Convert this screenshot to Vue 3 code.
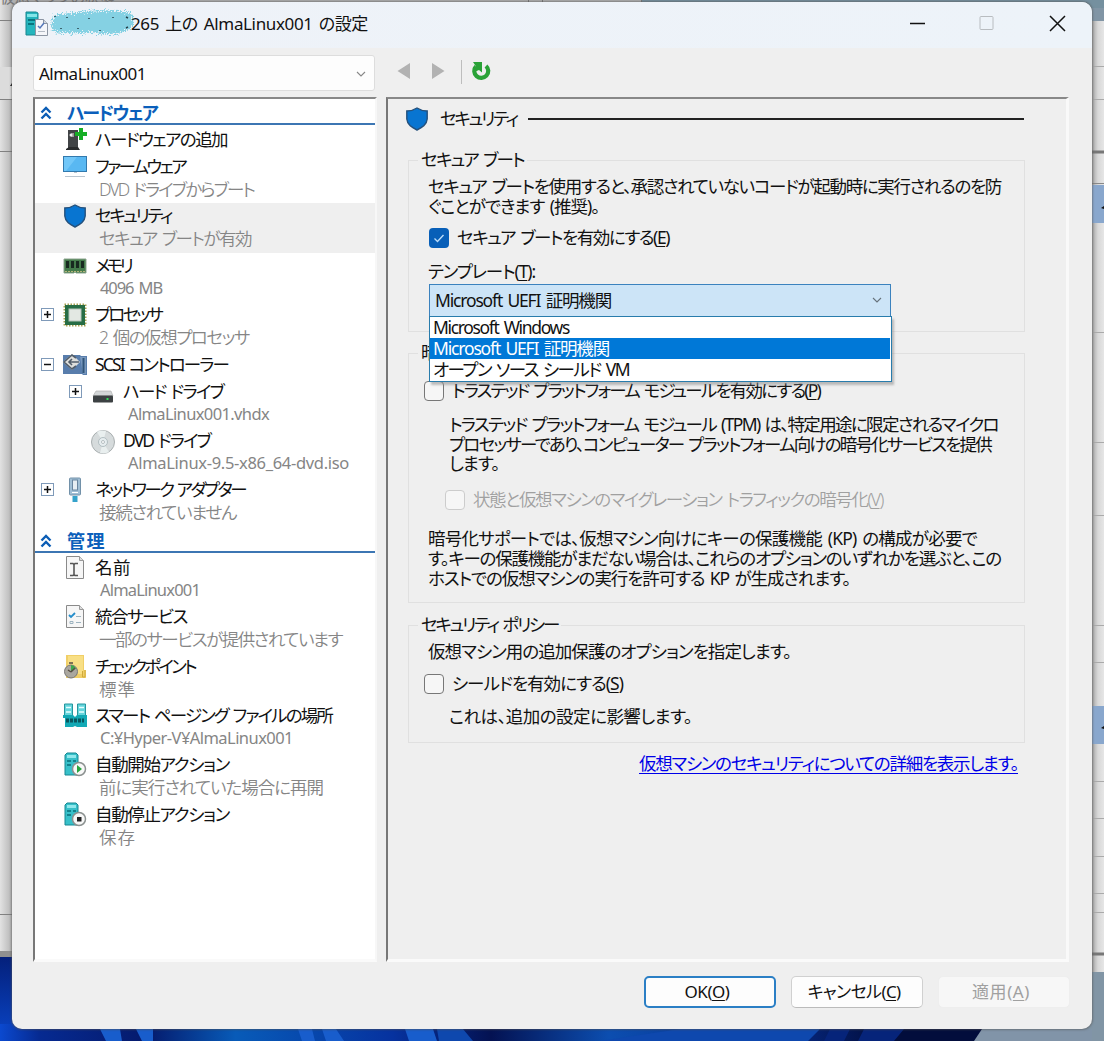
<script setup>
import { ref } from 'vue'

// Spreads the letters of a line so that it takes the given width.
const vFit = {
  mounted(el, { value }) {
    const natural = el.getBoundingClientRect().width
    const count = [...el.textContent].length
    el.style.letterSpacing = `${(value - natural) / count}px`
  },
}

const hardware = ref([
  { icon: 'add', name: 'ハードウェアの追加', w: 132 },
  { icon: 'firmware', name: 'ファームウェア', w: 90, sub: 'DVD ドライブからブート', sw: 155 },
  { icon: 'shield', name: 'セキュリティ', w: 76, sub: 'セキュア ブートが有効', sw: 152, selected: true },
  { icon: 'memory', name: 'メモリ', w: 35, sub: '4096 MB', sw: 62, latin: true },
  { icon: 'cpu', name: 'プロセッサ', w: 66, sub: '2 個の仮想プロセッサ', sw: 150, box: '+' },
  { icon: 'scsi', name: 'SCSI コントローラー', w: 133, box: '-' },
  { icon: 'disk', name: 'ハード ドライブ', w: 100, sub: 'AlmaLinux001.vhdx', sw: 141, latin: true, box: '+', child: true },
  { icon: 'dvd', name: 'DVD ドライブ', w: 87, sub: 'AlmaLinux-9.5-x86_64-dvd.iso', sw: 221, latin: true, child: true },
  { icon: 'network', name: 'ネットワーク アダプター', w: 150, sub: '接続されていません', sw: 137, box: '+' },
])
const management = ref([
  { icon: 'name', name: '名前', w: 36, sub: 'AlmaLinux001', sw: 100, latin: true },
  { icon: 'services', name: '統合サービス', w: 92, sub: '一部のサービスが提供されています', sw: 243 },
  { icon: 'checkpoint', name: 'チェックポイント', w: 100, sub: '標準', sw: 37 },
  { icon: 'paging', name: 'スマート ページング ファイルの場所', w: 237, sub: 'C:¥Hyper-V¥AlmaLinux001', sw: 193, latin: true },
  { icon: 'start', name: '自動開始アクション', w: 134, sub: '前に実行されていた場合に再開', sw: 224 },
  { icon: 'stop', name: '自動停止アクション', w: 134, sub: '保存', sw: 37 },
])
const groups = [
  { title: 'ハードウェア', w: 90, items: hardware.value },
  { title: '管理', w: 39, items: management.value },
]
</script>

<template>
  <div class="desktop">
    <svg class="backdrop" width="1104" height="1041" viewBox="0 0 1104 1041">
      <defs>
        <linearGradient id="wall" x1="0" x2="1">
          <stop offset="0" stop-color="#0b49cf" /><stop offset=".04" stop-color="#062a91" />
          <stop offset=".15" stop-color="#051a6c" /><stop offset=".24" stop-color="#085bb8" />
          <stop offset=".4" stop-color="#06329f" /><stop offset=".5" stop-color="#041252" />
          <stop offset=".62" stop-color="#0c4eb0" /><stop offset=".8" stop-color="#062a85" /><stop offset=".9" stop-color="#020d3c" />
        </linearGradient>
        <linearGradient id="side" x1="0" x2="1"><stop offset="0" stop-color="#a5a5a5" /><stop offset=".5" stop-color="#d8d8d8" /><stop offset="1" stop-color="#e6e6e6" /></linearGradient>
        <linearGradient id="lside" x1="0" x2="1"><stop offset="0" stop-color="#e2e2e2" /><stop offset="1" stop-color="#b5b5b5" /></linearGradient>
        <linearGradient id="leftblue" x1="0" y1="0" x2="0" y2="1"><stop offset="0" stop-color="#04207b" /><stop offset="1" stop-color="#0a46c8" /></linearGradient>
      </defs>
      <rect width="1104" height="1041" fill="#8195a5" />
      <rect width="564" height="8" fill="#b0b0b0" />
      <path d="M528.500 0v3M542.500 0v3M641.500 0v3" stroke="#777" />
      <rect x="564" width="77" height="8" fill="#b0b0b0" />
      <rect x="642" width="462" height="8" fill="#75909f" />
      <rect y="0" width="12" height="957" fill="url(#lside)" />
      <path d="M0 20.500h12M0 99.500h12M0 151.500h12M0 914.500h12" stroke="#808080" />
      <rect y="67" width="12" height="32" fill="#dcdcdc" />
      <rect y="951" width="12" height="6" fill="#909090" />
      <rect y="957" width="30" height="84" fill="url(#leftblue)" />
      <rect y="1024" width="982" height="17" fill="url(#wall)" />
      <path d="M100 1029h20l2 12h-16zM136 1029h17v12h-11zM298 1029h14l3 12h-13zM322 1029h14l8 12h-18zM405 1029h28l4 12h-28z" fill="#185dcc" />
      <path d="M437 1029h26l10 12h-34zM600 1041l80-12h140l-12 12z" fill="#0e48ae" />
      <path d="M830 1029h20l-6 12h-20zM864 1029h40l-10 12h-36z" fill="#06247a" />
      <path d="M982 1029h110v12H974z" fill="#8194a8" />
      <rect x="1092" y="21" width="12" height="951" fill="url(#side)" />
      <path d="M1092 66.500h12M1092 99.500h12M1092 332.500h12M1092 442.500h12M1092 515.500h12M1092 625.500h12M1092 662.500h12M1092 781.500h12M1092 818.500h12M1092 856.500h12M1092 893.500h12M1092 912.500h12" stroke="#aaa" />
      <path d="M1092 152h12M1092 954h12" stroke="#777" stroke-width="3" />
      <path d="M1092 183.500h12" stroke="#888" />
      <rect x="1092" y="185" width="12" height="38" fill="#89a7cd" />
      <rect x="1092" y="706" width="12" height="38" fill="#89a7cd" />
      <path d="M1101 208l3-2v3zM1101 728l3-2v3z" fill="#111" />
      <path d="M12 83l-2 3h2z" fill="#111" />
    </svg>
    <span class="behind">仮想マシンの状態</span>

    <div class="window">
      <header class="titlebar">
        <svg class="appicon" width="24" height="26" viewBox="0 0 24 26">
          <path d="M1 1h10l2 1v22H1z" fill="#25b5bd" stroke="#19868f" />
          <path d="M2 3h10v3H2z" fill="#83e6e8" /><path d="M3 9h8M3 13h6" stroke="#08757e" stroke-width="2" />
          <path d="M10.500 8.500h8l4 4v12h-12z" fill="#f5f6fa" stroke="#8c95a3" /><path d="M18.500 8.500v4h4" fill="#cfd6df" stroke="#8c95a3" />
          <path d="M13 15l2 2 4-5" fill="none" stroke="#5577b9" stroke-width="1.500" /><path d="M13 20.500h7" stroke="#b4bbc5" />
        </svg>
        <svg class="scribble" width="84" height="28" viewBox="0 0 84 28">
          <filter id="spray" x="-10%" y="-20%" width="120%" height="140%">
            <feTurbulence type="fractalNoise" baseFrequency=".8" numOctaves="2" seed="4" />
            <feDisplacementMap in="SourceGraphic" scale="11" xChannelSelector="R" yChannelSelector="G" />
          </filter>
          <path d="M3 12C1 5 13 6 24 5C45 1 70 2 80 5C87 12 85 19 77 22C66 28 50 26 42 24C28 25 12 27 4 23C0 18 1 15 3 12z" fill="#85d1e3" filter="url(#spray)" />
          <path d="M5 8v1M17 9v1M28 20v1M39 10v1M50 22v1M63 9v1M76 9l2 1M76 20l2-1M11 20v1" stroke="#24404a" stroke-width="1.500" />
        </svg>
        <h1 class="title"><span v-fit="237">265 上の AlmaLinux001 の設定</span></h1>
        <svg class="controls" width="160" height="20" viewBox="0 0 160 20">
          <path d="M0 10.500h15" stroke="#111" stroke-width="1.300" />
          <rect x="70" y="3.500" width="13" height="13" rx="1" fill="none" stroke="#b8bcc0" />
          <path d="M140 3l15 15M155 3l-15 15" stroke="#111" stroke-width="1.500" />
        </svg>
      </header>

      <div class="toolbar">
        <div class="vmselect"><span v-fit="107">AlmaLinux001</span>
          <svg width="10" height="8" viewBox="0 0 10 8"><path d="M1 2l4 4 4-4" fill="none" stroke="#888" stroke-width="1.100" /></svg>
        </div>
        <svg class="nav" width="100" height="28" viewBox="0 0 100 28">
          <path d="M15 6v16L2.500 14zM37 6v16l12.500-8z" fill="#b2b2b2" />
          <path d="M66.500 3v24" stroke="#bdbdbd" />
          <path d="M81 9.500A7 6.800 0 1 0 91 9" fill="none" stroke="#2aa237" stroke-width="4.200" />
          <path d="M78 5h9v10.500l-3-2.500-3.500 1.500L81 9.500z" fill="#2aa237" />
        </svg>
      </div>

      <main class="panes">
        <nav class="tree">
          <section v-for="g in groups" :key="g.title" class="branch">
            <h2 class="branch-head">
              <svg width="12" height="14" viewBox="0 0 12 14"><path d="M1.500 6.500L6 2l4.500 4.500M1.500 12.500L6 8l4.500 4.500" fill="none" stroke="#0b5db5" stroke-width="2.400" /></svg>
              <span v-fit="g.w">{{ g.title }}</span>
            </h2>
            <div v-for="i in g.items" :key="i.name" class="item" :class="{ selected: i.selected, single: !i.sub, child: i.child }">
              <span class="toggle">
                <svg v-if="i.box" width="13" height="13" viewBox="0 0 13 13">
                  <rect x=".5" y=".5" width="12" height="12" fill="#fff" stroke="#7f9ab9" />
                  <path d="M3 6.500h7" stroke="#111" stroke-width="1.500" /><path v-if="i.box === '+'" d="M6.500 3v7" stroke="#111" stroke-width="1.500" />
                </svg>
              </span>
              <svg class="icon" width="26" height="26" viewBox="0 0 26 26">
                <g v-if="i.icon === 'add'">
                  <path d="M6 3h10v18H6z" fill="#414446" /><path d="M4 22l3-2h9l2 3H4z" fill="#292b2c" /><path d="M9 6h3v4H9z" fill="#999" /><circle cx="9" cy="8" r="1.500" fill="#eee" />
                  <path d="M17 1h4v4h4v4h-4v4h-4V9h-4V5h4z" fill="#16ae25" />
                </g>
                <g v-else-if="i.icon === 'firmware'">
                  <rect x="1.500" y="2.500" width="23" height="15" fill="#59b8f2" stroke="#3279ad" /><path d="M2 3h13L4 17H2z" fill="#83d0fc" opacity=".6" /><path d="M12 18.500h3M3 22.500h20" stroke="#b9c5cf" />
                </g>
                <path v-else-if="i.icon === 'shield'" d="M13 2C10 4 6 5 2.800 5V13C3.300 19 8 21.500 13 24 18 21.500 22.700 19 23.200 13V5C20 5 16 4 13 2z" fill="#0875d1" stroke="#25517c" stroke-width="1.400" />
                <g v-else-if="i.icon === 'memory'">
                  <path d="M2 6h22v14H14l-1-1-1 1H2z" fill="#447b4b" stroke="#8ca58e" /><path d="M4 8h3v7H4zM9 8h3v7H9zM14 8h3v7h-3zM19 8h3v7h-3z" fill="#182a20" /><path d="M3 18.500h20" stroke="#b2b579" stroke-dasharray="2 1" />
                </g>
                <g v-else-if="i.icon === 'cpu'">
                  <rect x="2.500" y="2.500" width="21" height="21" fill="none" stroke="#a8a151" stroke-width="2" stroke-dasharray="1.500 1.500" />
                  <rect x="3" y="3" width="20" height="20" fill="#276d45" /><rect x="7" y="7" width="12" height="12" fill="#e3e8e3" stroke="#b5c4b8" />
                </g>
                <g v-else-if="i.icon === 'scsi'">
                  <path d="M1 3h17l1 1h6v19h-4l-1-1H1z" fill="#587dac" /><path d="M18 5h6v17h-3z" fill="#7898bd" /><path d="M21.500 6v15" stroke="#315478" stroke-width="2" />
                  <path d="M10 2l8 8-8 8-9-8z" fill="#dfdfdc" /><path d="M14 6l-4-3-8 7 8 7 4-3M7 10h10M10 7l-3 3 3 3" fill="none" stroke="#525e6b" stroke-width="1.600" />
                </g>
                <g v-else-if="i.icon === 'disk'">
                  <path d="M6 12h15l2 5H3z" fill="#d3d6d7" stroke="#aaa" stroke-width=".6" /><rect x="3" y="16.500" width="20" height="7" rx="1" fill="#3c4143" /><path d="M16.500 20h2" stroke="#31db59" stroke-width="2" />
                </g>
                <g v-else-if="i.icon === 'dvd'">
                  <circle cx="13" cy="14" r="11.500" fill="#d6dbdc" stroke="#aab0b1" /><path d="M13 14L7 4a12 12 0 0 1 9-1zM13 14l6 10a12 12 0 0 1-9 1z" fill="#e9efef" /><circle cx="13" cy="14" r="4.500" fill="#e6edef" stroke="#b2bec1" /><circle cx="13" cy="14" r="1.500" fill="#fff" stroke="#9ca8ab" stroke-width=".7" />
                </g>
                <g v-else-if="i.icon === 'network'">
                  <rect x="7.500" y="1" width="11" height="17" rx="1" fill="#a0bed5" stroke="#7291a9" /><rect x="10.500" y="3" width="5" height="10" fill="#e6edf3" stroke="#6985a0" /><path d="M10 15.500h6" stroke="#fff" /><path d="M10.500 19h5v6h-5z" fill="#35a2cb" />
                </g>
                <g v-else-if="i.icon === 'name' || i.icon === 'services'">
                  <path d="M4.500 1.500h13l4 4v18h-17z" fill="#f6f6f6" stroke="#8a8a8a" /><path d="M17.500 1.500v4h4" fill="#ddd" stroke="#999" />
                  <path v-if="i.icon === 'name'" d="M8 8.500h3l1 1 1-1h3M12 9v11M8 20.500h3l1-1 1 1h3" fill="none" stroke="#555" stroke-width="1.600" />
                  <g v-else><path d="M7 11l2 2 4-4" fill="none" stroke="#248dcb" stroke-width="1.800" /><path d="M14 12.500h5M14 18.500h5M8 17.500h3v2H8z" stroke="#9db3c0" fill="none" /></g>
                </g>
                <g v-else-if="i.icon === 'checkpoint'">
                  <path d="M4 1h18v15h2v8H4z" fill="#f1cf67" /><path d="M6 2h15v18H6z" fill="#f8df85" /><path d="M20.500 17v6h2.500v-7" fill="none" stroke="#cfaa3d" />
                  <circle cx="9" cy="17.500" r="6.500" fill="#aaa79f" stroke="#777" /><path d="M9 17.500V11a6.500 6.500 0 0 1 5 3.500z" fill="#3caa4b" /><path d="M9 18l4-4M9 18l-3-2M7 9h4" stroke="#564d44" stroke-width="1.400" />
                </g>
                <g v-else-if="i.icon === 'paging'">
                  <path d="M2.500 1h8v12h-8zM15.500 1h8v12h-8z" fill="#65d5dc" stroke="#25969e" /><path d="M4 4.500h5M4 9h5M17 4.500h5M17 9h5" stroke="#e6ffff" stroke-width="1.600" /><path d="M1 12h10l2 2 2-2h10v12H15l-2-1-2 1H3V15H1z" fill="#12a9b5" /><path d="M4 17.500h18" stroke="#08565f" stroke-width="4" stroke-dasharray="3 1" />
                </g>
                <g v-else>
                  <path d="M3 3l2-2h9l2 2v20H3z" fill="#37c0c9" stroke="#168792" /><path d="M5 3h9v3H5z" fill="#91e8ec" /><path d="M5 9h4M5 13h4M11 9h3" stroke="#086e79" stroke-width="1.500" />
                  <circle cx="17" cy="17" r="6.500" fill="#f8f8f8" stroke="#8b9190" stroke-width="1.500" />
                  <path v-if="i.icon === 'start'" d="M15 13l5 4-5 4z" fill="#27a53d" /><path v-else d="M15 15h4.500v4.500H15z" fill="#222" />
                </g>
              </svg>
              <div class="label">
                <div class="main"><span v-fit="i.w">{{ i.name }}</span></div>
                <div v-if="i.sub" class="sub" :class="{ latin: i.latin }"><span v-fit="i.sw">{{ i.sub }}</span></div>
              </div>
            </div>
          </section>
        </nav>

        <article class="detail">
          <div class="heading">
            <svg width="26" height="26" viewBox="0 0 26 26"><path d="M13 2C10 4 6 5 2.800 5V13C3.300 19 8 21.500 13 24 18 21.500 22.700 19 23.200 13V5C20 5 16 4 13 2z" fill="#0875d1" stroke="#25517c" stroke-width="1.400" /></svg>
            <span v-fit="77">セキュリティ</span><i class="rule"></i>
          </div>

          <section class="group boot">
            <h3 class="legend"><span v-fit="103">セキュア ブート</span></h3>
            <div class="para"><span v-fit="573">セキュア ブートを使用すると、承認されていないコードが起動時に実行されるのを防</span><br><span v-fit="171">ぐことができます (推奨)。</span></div>
            <label class="check c1"><svg width="20" height="20" viewBox="0 0 20 20"><rect width="20" height="20" rx="4" fill="#085fb8" /><path d="M5.500 10.500l3 3 6-6.500" fill="none" stroke="#b9dcfa" stroke-width="1.400" /></svg><span v-fit="212">セキュア ブートを有効にする(<u>E</u>)</span></label>
            <div class="tlabel"><span v-fit="107">テンプレート(<u>T</u>):</span></div>
            <div class="combo"><span v-fit="176">Microsoft UEFI 証明機関</span>
              <svg width="10" height="8" viewBox="0 0 10 8"><path d="M1 2l4 4 4-4" fill="none" stroke="#66727c" stroke-width="1.100" /></svg>
              <ul class="options">
                <li><span v-fit="136">Microsoft Windows</span></li>
                <li class="on"><span v-fit="176">Microsoft UEFI 証明機関</span></li>
                <li><span v-fit="196">オープン ソース シールド VM</span></li>
              </ul>
            </div>
          </section>

          <section class="group crypt">
            <h3 class="legend"><span v-fit="133">暗号化サポート</span></h3>
            <label class="check c2"><i class="tick"></i><span v-fit="368">トラステッド プラットフォーム モジュールを有効にする(<u>P</u>)</span></label>
            <div class="para p2"><span v-fit="549">トラステッド プラットフォーム モジュール (TPM) は、特定用途に限定されるマイクロ</span><br><span v-fit="542">プロセッサーであり、コンピューター プラットフォーム向けの暗号化サービスを提供</span><br><span v-fit="50">します。</span></div>
            <label class="check c3"><i class="tick"></i><span v-fit="410">状態と仮想マシンのマイグレーション トラフィックの暗号化(<u>V</u>)</span></label>
            <div class="para p3"><span v-fit="549">暗号化サポートでは、仮想マシン向けにキーの保護機能 (KP) の構成が必要で</span><br><span v-fit="573">す。キーの保護機能がまだない場合は、これらのオプションのいずれかを選ぶと、この</span><br><span v-fit="422">ホストでの仮想マシンの実行を許可する KP が生成されます。</span></div>
          </section>

          <section class="group policy">
            <h3 class="legend"><span v-fit="137">セキュリティ ポリシー</span></h3>
            <div class="para p4"><span v-fit="363">仮想マシン用の追加保護のオプションを指定します。</span></div>
            <label class="check c4"><i class="tick"></i><span v-fit="171">シールドを有効にする(<u>S</u>)</span></label>
            <div class="para p5"><span v-fit="243">これは、追加の設定に影響します。</span></div>
          </section>
          <a class="more"><span v-fit="379">仮想マシンのセキュリティについての詳細を表示します。</span></a>
        </article>
      </main>

      <footer class="buttons">
        <button class="btn primary"><span v-fit="45">OK(<u>O</u>)</span></button>
        <button class="btn"><span v-fit="93">キャンセル(<u>C</u>)</span></button>
        <button class="btn off"><span v-fit="58">適用(<u>A</u>)</span></button>
      </footer>
    </div>
  </div>
</template>

<style>
body { margin: 0; overflow: hidden; }
</style>

<style scoped>
* { box-sizing: border-box; }
.desktop { position: relative; width: 1104px; height: 1041px; padding: 2px 12px 12px; overflow: hidden; font: 17.5px/20px "Noto Sans", "Noto Sans CJK JP", sans-serif; font-feature-settings: "palt"; word-spacing: 2px; color: #111; }
.backdrop { position: absolute; left: 0; top: 0; display: block; }
.behind { position: absolute; left: 0; top: -12px; font-size: 15px; line-height: 18px; color: #777; }
span { white-space: nowrap; display: inline-block; }
u { text-decoration-thickness: 1px; text-underline-offset: 2px; }
.window { position: relative; width: 1080px; height: 1027px; border-radius: 10px; background: #efefef; overflow: hidden; box-shadow: 0 0 2px 1px #5558; }
.titlebar { display: flex; height: 46px; padding: 7px 25px 0 13px; background: linear-gradient(90deg, #eef2f8, #edf3f9); }
.appicon { margin-top: 2px; }
.scribble { margin: -1px 0 0 1px; flex: none; }
.title { margin: 5px 0 0 -3px; font-size: 17px; line-height: 20px; font-weight: 400; z-index: 1; }
.controls { margin: 4px -3px 0 auto; }
.toolbar { display: flex; height: 49px; padding: 7px 0 0 21px; }
.vmselect { display: flex; align-items: center; justify-content: space-between; width: 342px; height: 36px; padding: 1px 8px 0 5px; background: #fdfdfd; border: 1px solid #ddd; border-radius: 3px; font-size: 17px; }
.nav { margin: 2px 0 0 20px; }
.panes { display: flex; gap: 9px; height: 866px; padding: 0 23px 0 21px; }
.tree { width: 344px; height: 865px; border: 2px solid #777; border-top-color: #888; border-right: 2px solid #f7f7f7; border-bottom: 3px solid #fafafa; background: #fff; }
.branch-head { display: flex; align-items: center; height: 26px; gap: 15px; margin: 0 0 2px; padding-left: 5px; border-bottom: 2px solid #3c76b3; font-size: 18px; font-weight: 700; line-height: 22px; color: #0b5fbb; }
.branch-head svg { flex: none; margin-top: 4px; }
.branch-head span { margin-top: 4px; }
.item { display: flex; height: 49.400px; padding-left: 6px; }
.item.single { height: 27px; }
.item.child { padding-left: 34px; }
.item.selected { background: #efefef; }
.toggle { width: 13px; height: 13px; margin-top: 6px; line-height: 0; }
.icon { flex: none; margin: 0 0 0 8px; }
.label { margin-left: 7px; }
.main { height: 23px; padding-top: 2px; }
.sub { height: 22px; padding: 2px 0 0 4px; color: #858585; font-weight: 350; }
.sub.latin { padding-left: 5px; font-size: 16.500px; font-weight: 400; }
.detail { width: 683px; height: 865px; padding: 4px 43px 0 20px; border: 2px solid #777; border-top-color: #888; border-right: 3px solid #f9f9f9; border-bottom: 3px solid #fafafa; background: #efefef; }
.heading { display: flex; align-items: center; height: 31px; margin-left: -4px; gap: 11px; }
.heading svg { margin: 1px -1px 0 0; }
.heading span { margin-top: -1px; }
.rule { flex: 1; height: 2px; background: #222; margin-right: -1px; }
.group { display: flow-root; border: 1px solid #e0e0e0; width: 617px; }
.boot { height: 172px; margin-top: 26px; }
.crypt { height: 250px; margin-top: 21px; }
.policy { height: 118px; margin-top: 22px; }
.legend { display: table; margin: -13px 0 0 9px; padding: 0 3px; background: #efefef; font-weight: 400; font-size: 17.5px; line-height: 22px; }
.para { margin: 7px 0 0 19px; line-height: 19.700px; }
.check { display: flex; align-items: center; height: 22px; gap: 8px; margin-left: 20px; }
.check svg { flex: none; }
.check span { margin-top: -2px; }
.tick { flex: none; width: 20px; height: 20px; border: 1.500px solid #777; border-radius: 4px; background: #f6f6f6; }
.c1 { margin-top: 11px; }
.tlabel { margin: 12px 0 0 19px; }
.combo { position: relative; display: flex; align-items: center; justify-content: space-between; width: 462px; height: 34px; margin: 3px 0 0 20px; padding: 0 8px 2px 5px; background: #cce4f7; border: 1px solid #3b82be; }
.options { position: absolute; z-index: 2; left: -1px; top: 31px; width: 463px; height: 66px; margin: 0; padding: 0 1px 1px 0; list-style: none; background: #fff; border: 1px solid #287cac; box-shadow: 2px 3px 2px #8888; }
.options li { height: 21px; padding-left: 3px; line-height: 20px; }
.options .on { color: #fff; background: #0078d7; }
.c2 { margin: 17px 0 0 15px; }
.p2 { margin: 13px 0 0 40px; }
.c3 { margin: 15px 0 0 36px; color: #a0a0a0; font-weight: 350; }
.c3 .tick { border-color: #ccc; }
.p3 { margin-top: 18px; }
.p4 { margin-top: 7px; }
.c4 { margin: 11px 0 0 15px; }
.p5 { margin: 12px 0 0 40px; }
.more { display: block; width: max-content; margin: 10px 0 0 231px; color: #0000e8; text-decoration: underline; text-underline-offset: 3px; }
.more span { display: inline; }
.buttons { display: flex; justify-content: flex-end; gap: 15px; padding: 13px 22px 0 0; }
.btn { width: 132px; height: 32px; padding: 0 6px 0 0; border: 1px solid #d0d0d0; border-bottom-color: #bbb; border-radius: 5px; background: #fdfdfd; color: #111; font: inherit; font-feature-settings: "palt"; font-size: 17px; }
.primary { border: 2px solid #2b7fc5; }
.off { border-color: #eee; background: #f7f7f7; color: #a0a0a0; }
</style>
